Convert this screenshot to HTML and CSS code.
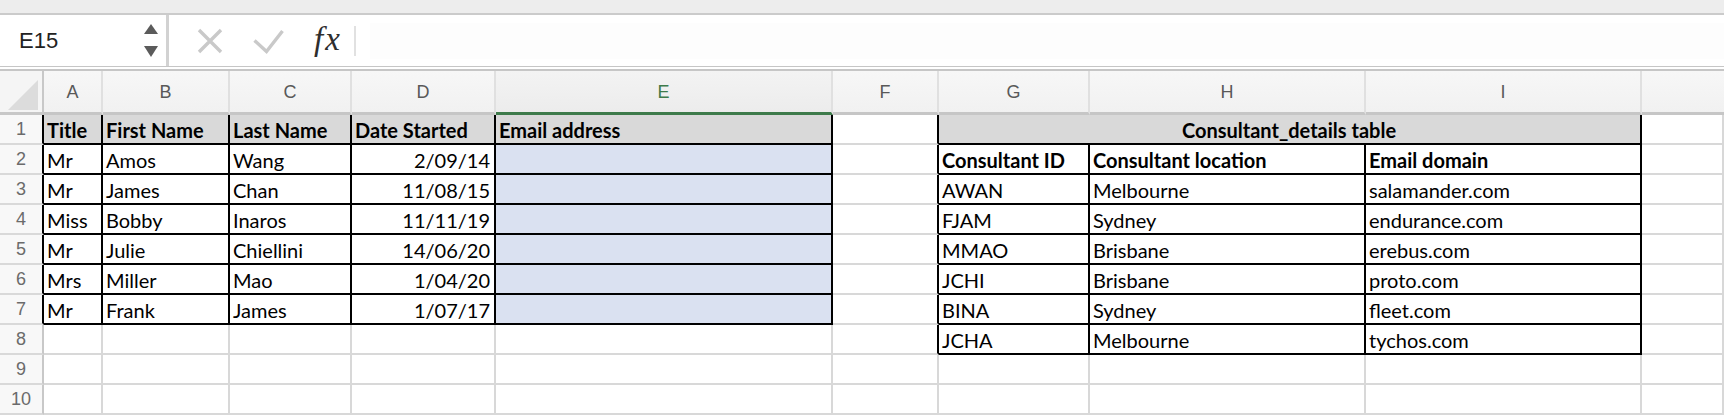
FILE: index.html
```html
<!DOCTYPE html>
<html>
<head>
<meta charset="utf-8">
<link rel="stylesheet" href="styles.css">
</head>
<body>
<div class="topband"></div>
<div class="fbar">
  <div class="namebox">
    <span class="ref">E15</span>
    <svg class="spin" width="14" height="34" viewBox="0 0 14 34"><polygon points="0,10 7,0 14,10" fill="#5b5b5b"/><polygon points="0,22 14,22 7,33" fill="#5b5b5b"/></svg>
  </div>
  <svg class="ico-x" width="26" height="26" viewBox="0 0 26 26"><path d="M2 2 L24 24 M24 2 L2 24" stroke="#c9c9c9" stroke-width="3.4" fill="none"/></svg>
  <svg class="ico-ok" width="31" height="26" viewBox="0 0 31 26"><path d="M1.5 12.5 L13.5 23.5 L29.5 3" stroke="#c9c9c9" stroke-width="3.4" fill="none"/></svg>
  <span class="fx">fx</span>
  <span class="sep"></span>
  <div class="input"></div>
</div>
<div class="gap"></div>
<div class="sheet">
  <div class="corner"><svg width="44" height="42" viewBox="0 0 44 42"><polygon points="8,39 38,39 38,9" fill="#dcdcdc"/></svg></div>
  <div class="ch">A</div><div class="ch">B</div><div class="ch">C</div><div class="ch">D</div><div class="ch sel">E</div><div class="ch">F</div><div class="ch">G</div><div class="ch">H</div><div class="ch">I</div><div class="ch last"></div>

  <div class="rh kr">1</div>
  <div class="c k hd b">Title</div><div class="c k hd b">First Name</div><div class="c k hd b">Last Name</div><div class="c k hd b">Date Started</div><div class="c k hd b">Email address</div>
  <div class="c kr"></div>
  <div class="c k hd b ctr span3">Consultant_details table</div>
  <div class="c"></div>

  <div class="rh kr">2</div>
  <div class="c k">Mr</div><div class="c k">Amos</div><div class="c k">Wang</div><div class="c k r">2/09/14</div><div class="c k bl"></div>
  <div class="c kr"></div>
  <div class="c k b">Consultant ID</div><div class="c k b">Consultant location</div><div class="c k b">Email domain</div>
  <div class="c"></div>

  <div class="rh kr">3</div>
  <div class="c k">Mr</div><div class="c k">James</div><div class="c k">Chan</div><div class="c k r">11/08/15</div><div class="c k bl"></div>
  <div class="c kr"></div>
  <div class="c k">AWAN</div><div class="c k">Melbourne</div><div class="c k">salamander.com</div>
  <div class="c"></div>

  <div class="rh kr">4</div>
  <div class="c k">Miss</div><div class="c k">Bobby</div><div class="c k">Inaros</div><div class="c k r">11/11/19</div><div class="c k bl"></div>
  <div class="c kr"></div>
  <div class="c k">FJAM</div><div class="c k">Sydney</div><div class="c k">endurance.com</div>
  <div class="c"></div>

  <div class="rh kr">5</div>
  <div class="c k">Mr</div><div class="c k">Julie</div><div class="c k">Chiellini</div><div class="c k r">14/06/20</div><div class="c k bl"></div>
  <div class="c kr"></div>
  <div class="c k">MMAO</div><div class="c k">Brisbane</div><div class="c k">erebus.com</div>
  <div class="c"></div>

  <div class="rh kr">6</div>
  <div class="c k">Mrs</div><div class="c k">Miller</div><div class="c k">Mao</div><div class="c k r">1/04/20</div><div class="c k bl"></div>
  <div class="c kr"></div>
  <div class="c k">JCHI</div><div class="c k">Brisbane</div><div class="c k">proto.com</div>
  <div class="c"></div>

  <div class="rh kr">7</div>
  <div class="c k">Mr</div><div class="c k">Frank</div><div class="c k">James</div><div class="c k r">1/07/17</div><div class="c k bl"></div>
  <div class="c kr"></div>
  <div class="c k">BINA</div><div class="c k">Sydney</div><div class="c k">fleet.com</div>
  <div class="c"></div>

  <div class="rh">8</div>
  <div class="c"></div><div class="c"></div><div class="c"></div><div class="c"></div><div class="c"></div>
  <div class="c kr"></div>
  <div class="c k">JCHA</div><div class="c k">Melbourne</div><div class="c k">tychos.com</div>
  <div class="c"></div>

  <div class="rh">9</div>
  <div class="c"></div><div class="c"></div><div class="c"></div><div class="c"></div><div class="c"></div><div class="c"></div><div class="c"></div><div class="c"></div><div class="c"></div><div class="c"></div>

  <div class="rh">10</div>
  <div class="c"></div><div class="c"></div><div class="c"></div><div class="c"></div><div class="c"></div><div class="c"></div><div class="c"></div><div class="c"></div><div class="c"></div><div class="c"></div>
</div>
</body>
</html>
```
FILE: styles.css
```css
* { box-sizing: border-box; }
html, body { margin: 0; padding: 0; }
body {
  width: 1724px;
  height: 418px;
  overflow: hidden;
  background: #ffffff;
  font-family: Lato, "Liberation Sans", sans-serif;
}
.topband {
  height: 15px;
  background: #ededed;
  border-bottom: 2px solid #cbcbcb;
}
.fbar {
  display: flex;
  align-items: center;
  height: 52px;
  border-bottom: 1px solid #c6c6c6;
}
.namebox {
  width: 169px;
  height: 100%;
  border-right: 3px solid #d2d2d2;
  display: flex;
  align-items: center;
  justify-content: space-between;
  padding: 0 8px 0 19px;
}
.ref {
  font-family: "Liberation Sans", Arial, sans-serif;
  font-size: 22px;
  color: #222;
}
.spin { display: block; }
.ico-x { display: block; margin-left: 28px; }
.ico-ok { display: block; margin-left: 30px; }
.fx {
  margin-left: 30px;
  font-family: "Liberation Serif", "Times New Roman", serif;
  font-style: italic;
  font-size: 33px;
  letter-spacing: 2px;
  color: #2e2e2e;
  line-height: 1;
  padding-bottom: 3px;
}
.sep {
  display: block;
  margin-left: 12px;
  width: 2px;
  height: 30px;
  background: #e1e1e1;
}
.input {
  flex: 1;
  height: 36px;
  margin-left: 14px;
  background: #fdfdfd;
}
.gap { height: 2px; }
.sheet {
  display: grid;
  grid-template-columns: 44px 59px 127px 122px 144px 337px 106px 151px 276px 276px 82px;
  grid-template-rows: 44px repeat(10, 30px) 3px;
  height: 347px;
  overflow: hidden;
  border-top: 2px solid #c6c6c6;
}
.corner {
  background: #f5f5f5;
  border-right: 2px solid #c8c8c8;
  border-bottom: 3px solid #c8c8c8;
}
.corner svg { display: block; }
.ch {
  background: linear-gradient(#f7f7f7, #f1f1f1);
  border-right: 2px solid #e0e0e0;
  border-bottom: 3px solid #c6c6c6;
  display: flex;
  align-items: center;
  justify-content: center;
  padding-top: 1px;
  font-family: "Liberation Sans", Arial, sans-serif;
  font-size: 18px;
  color: #595959;
}
.ch.sel {
  background: linear-gradient(#f3f3f3, #ececec);
  border-bottom-color: #3e7b4b;
  color: #3e7b4b;
}
.ch.last { border-right: none; }
.rh {
  background: #f8f8f8;
  border-right: 2px solid #c8c8c8;
  border-bottom: 2px solid #d9d9d9;
  text-align: center;
  font-family: "Liberation Sans", Arial, sans-serif;
  font-size: 18px;
  line-height: 29px;
  color: #6b6b6b;
}
.c {
  border-right: 2px solid #d8d8d8;
  border-bottom: 2px solid #d8d8d8;
  padding: 3px 4px 0 3px;
  font-size: 20px;
  line-height: 25px;
  color: #000;
  white-space: nowrap;
  overflow: hidden;
}
.k { border-right-color: #000; border-bottom-color: #000; }
.kr { border-right-color: #000; }
.hd { background: #d9d9d9; }
.bl { background: #dae1f1; }
.b { font-weight: 700; }
.r { text-align: right; }
.ctr { text-align: center; }
.span3 { grid-column: span 3; }
```
